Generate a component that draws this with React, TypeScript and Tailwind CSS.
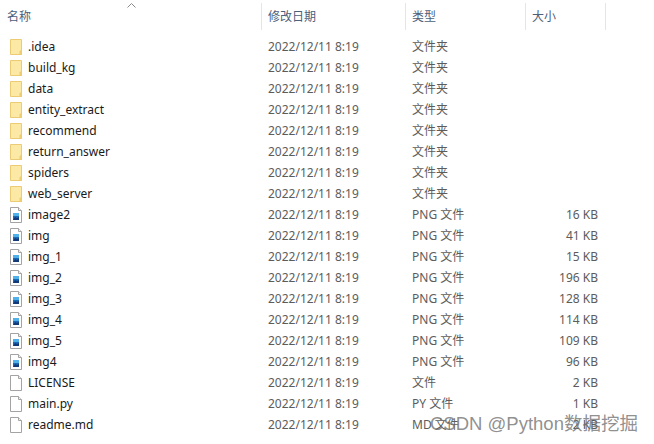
const FONT = "font-['Noto_Sans','Noto_Sans_CJK_SC',sans-serif]";

type Kind = "folder" | "image" | "file";
type Row = { name: string; kind: Kind; type: string; size?: string };

const rows: Row[] = [
  { name: ".idea", kind: "folder", type: "文件夹" },
  { name: "build_kg", kind: "folder", type: "文件夹" },
  { name: "data", kind: "folder", type: "文件夹" },
  { name: "entity_extract", kind: "folder", type: "文件夹" },
  { name: "recommend", kind: "folder", type: "文件夹" },
  { name: "return_answer", kind: "folder", type: "文件夹" },
  { name: "spiders", kind: "folder", type: "文件夹" },
  { name: "web_server", kind: "folder", type: "文件夹" },
  { name: "image2", kind: "image", type: "PNG 文件", size: "16 KB" },
  { name: "img", kind: "image", type: "PNG 文件", size: "41 KB" },
  { name: "img_1", kind: "image", type: "PNG 文件", size: "15 KB" },
  { name: "img_2", kind: "image", type: "PNG 文件", size: "196 KB" },
  { name: "img_3", kind: "image", type: "PNG 文件", size: "128 KB" },
  { name: "img_4", kind: "image", type: "PNG 文件", size: "114 KB" },
  { name: "img_5", kind: "image", type: "PNG 文件", size: "109 KB" },
  { name: "img4", kind: "image", type: "PNG 文件", size: "96 KB" },
  { name: "LICENSE", kind: "file", type: "文件", size: "2 KB" },
  { name: "main.py", kind: "file", type: "PY 文件", size: "1 KB" },
  { name: "readme.md", kind: "file", type: "MD 文件", size: "2 KB" },
];

function FileIcon({ kind }: { kind: Kind }) {
  if (kind === "folder") {
    return (
      <svg width="14" height="16" viewBox="0 0 14 16" className="shrink-0">
        <path d="M.5 .5h11v15h-11z" fill="#fde9a6" stroke="#ebcb73" />
        <path d="M10 12v3.500h1.500V12z" fill="#f3cf6e" stroke="#ebcb73" />
      </svg>
    );
  }
  return (
    <svg width="13" height="16" viewBox="0 0 13 16" className="shrink-0">
      <path d="M.5.5h8l3 3v12H.500z" fill="#fff" stroke="#a3a3a3" />
      <path d="M8.500.5v3h3" fill="#f1f1f1" stroke="#a3a3a3" />
      {kind === "image" && (
        <>
          <rect x="3" y="6" width="6" height="7" fill="#1c68b5" />
          <rect x="3" y="6" width="6" height="3" fill="#4fb0ea" />
          <path d="M3 13l2-3 2 1 2-1v3z" fill="#123a78" />
        </>
      )}
    </svg>
  );
}

function Divider() {
  return <div className="w-px h-[27px] bg-[#e5e5e5] shrink-0" />;
}

export default function App() {
  return (
    <div className={`relative w-[654px] h-[444px] overflow-hidden bg-white text-[12px] ${FONT}`}>
      <div className="relative flex h-[30px] pt-[3px] text-[#4c607a]">
        <span className="absolute left-[127px] top-0">
          <svg width="9" height="5" viewBox="0 0 9 5" className="mt-[3px]">
            <path d="M.5 4.500l4-4 4 4" fill="none" stroke="#8a8a8a" />
          </svg>
        </span>
        <div className="w-[261px] pl-[7px] leading-[28px]">名称</div>
        <Divider />
        <div className="w-[143px] pl-[6px] leading-[28px]">修改日期</div>
        <Divider />
        <div className="w-[119px] pl-[6px] leading-[28px]">类型</div>
        <Divider />
        <div className="w-[79px] pl-[6px] leading-[28px]">大小</div>
        <Divider />
      </div>
      <div className="pt-[6px]">
        {rows.map((row) => (
          <div key={row.name} className="flex items-center h-[21px]">
            <div className="w-[262px] flex items-center gap-[4px] pl-[10px] text-[#1a1a1a]">
              <FileIcon kind={row.kind} />
              <span className={row.kind === "folder" ? "" : "ml-px"}>{row.name}</span>
            </div>
            <div className="w-[144px] pl-[6px] text-[#5c5c5c]">2022/12/11 8:19</div>
            <div className="w-[120px] pl-[6px] text-[#5c5c5c]">{row.type}</div>
            <div className="w-[72px] text-right text-[#5c5c5c]">{row.size}</div>
          </div>
        ))}
      </div>
      <div className="absolute left-[430px] top-[410px] text-[18.5px] leading-[28px] text-[#737373]/80 font-['Liberation_Sans','Noto_Sans_CJK_SC',sans-serif] whitespace-nowrap">
        CSDN @Python数据挖掘
      </div>
    </div>
  );
}
